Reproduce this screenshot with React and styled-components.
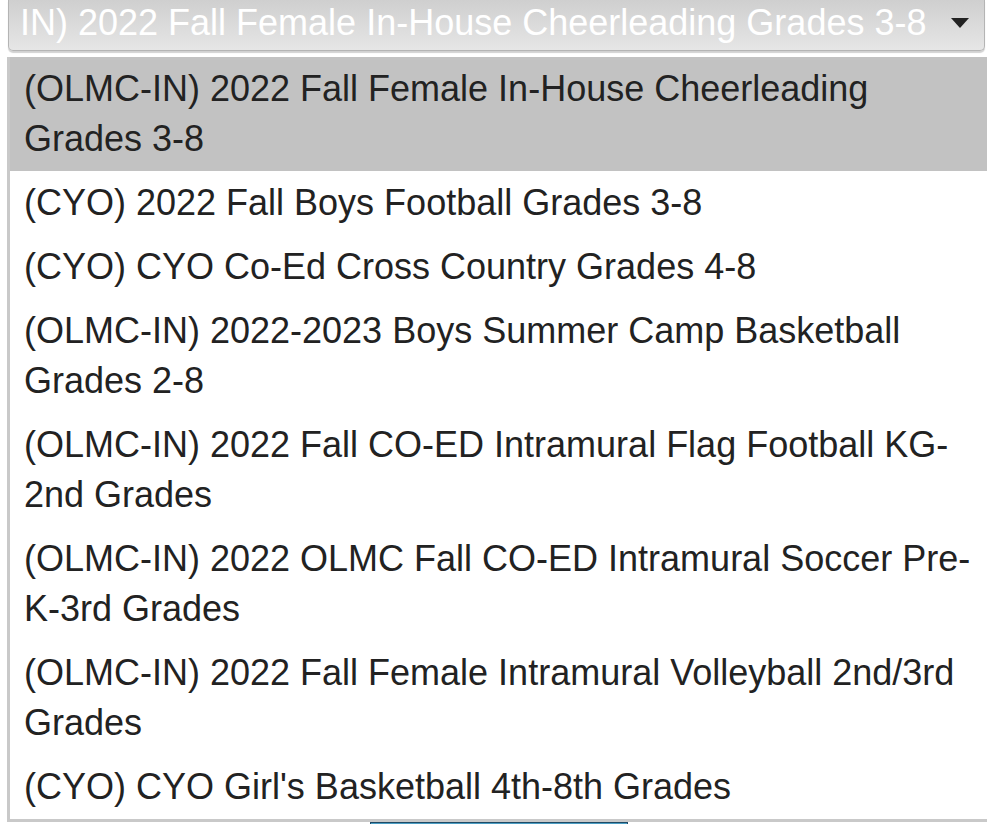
import React from 'react';
import styled, { createGlobalStyle } from 'styled-components';

const font = '"Liberation Sans", Arial, Helvetica, sans-serif';

const GlobalStyle = createGlobalStyle`
    html, body {
        margin: 0;
        padding: 0;
        background: #fff;
        overflow: hidden;
    }
`;

const Page = styled.div`
    width: 987px;
    height: 824px;
    overflow: hidden;
    font-family: ${font};
`;

const Select = styled.div`
    margin-left: 8px;
    width: 975px;
    height: 50px;
    display: flex;
    align-items: center;
    background: linear-gradient(#cfcfcf, #e6e6e6);
    border: 1px solid #b4b4b4;
    border-top: none;
    border-radius: 0 0 5px 5px;
    box-shadow: 0 2px 1px rgba(0, 0, 0, 0.18);
    overflow: hidden;
`;

const SelectText = styled.span`
    flex: 1;
    padding-left: 11px;
    color: #fff;
    font-size: 36px;
    white-space: nowrap;
    overflow: hidden;
    margin-top: -5px;
`;

const Arrow = styled.svg`
    width: 20px;
    height: 12px;
    margin: -4px 14px 0 20px;
    flex: none;
`;

const List = styled.ul`
    list-style: none;
    margin: 6px 0 0 7px;
    padding: 0;
    border-left: 3px solid #c9c9c9;
    border-bottom: 3px solid #c9c9c9;
`;

const Option = styled.li`
    padding: 7px 8px 7px 14px;
    font-size: 36px;
    line-height: 50px;
    color: #222;
    background: ${p => (p.$selected ? '#c2c2c2' : '#fff')};
`;

const Button = styled.div`
    margin-left: 370px;
    width: 256px;
    height: 12px;
    background: #4a9cc2;
    border: 1px solid #1e4a66;
`;

const options = [
    '(OLMC-IN) 2022 Fall Female In-House Cheerleading Grades 3-8',
    '(CYO) 2022 Fall Boys Football Grades 3-8',
    '(CYO) CYO Co-Ed Cross Country Grades 4-8',
    '(OLMC-IN) 2022-2023 Boys Summer Camp Basketball Grades 2-8',
    '(OLMC-IN) 2022 Fall CO-ED Intramural Flag Football KG-2nd Grades',
    '(OLMC-IN) 2022 OLMC Fall CO-ED Intramural Soccer Pre-K-3rd Grades',
    '(OLMC-IN) 2022 Fall Female Intramural Volleyball 2nd/3rd Grades',
    "(CYO) CYO Girl's Basketball 4th-8th Grades",
];

const App = () => (
    <Page>
        <GlobalStyle />
        <Select>
            <SelectText>IN) 2022 Fall Female In-House Cheerleading Grades 3-8</SelectText>
            <Arrow viewBox="0 0 20 12">
                <path d="M1 1 H19 L10 11 Z" fill="#222" />
            </Arrow>
        </Select>
        <List>
            {options.map((o, i) => (
                <Option key={o} $selected={i === 0}>
                    {o}
                </Option>
            ))}
        </List>
        <Button />
    </Page>
);

export default App;
